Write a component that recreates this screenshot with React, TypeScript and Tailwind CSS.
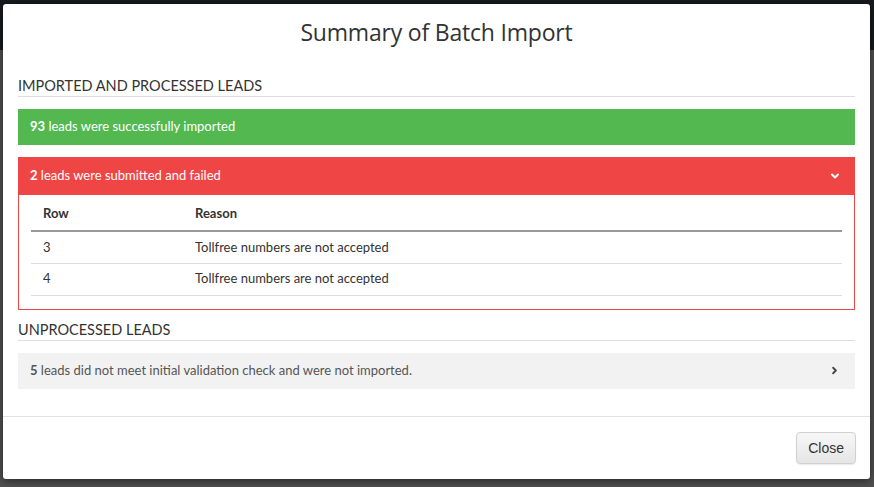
import { ChevronDown, ChevronRight } from "lucide-react";

const failed = [
  { row: 3, reason: "Tollfree numbers are not accepted" },
  { row: 4, reason: "Tollfree numbers are not accepted" },
];

function SectionTitle({ children }: { children: React.ReactNode }) {
  return (
    <h3 className="text-[14.5px] leading-[18px] text-[#333] uppercase border-b border-[#dedede] pb-[1px]">
      {children}
    </h3>
  );
}

export default function App() {
  return (
    <div className="relative w-[874px] h-[487px] bg-[#505050] overflow-hidden font-['Lato',sans-serif]">
      {/* app header behind the backdrop */}
      <div className="h-[50px] bg-[#161a1e]" />

      {/* Modal */}
      <div className="absolute left-[3px] top-[4px] w-[867px] h-[475px] bg-white rounded-[3px] shadow-[0_2px_8px_rgba(0,0,0,0.5)] flex flex-col">
        <div className="h-[56px] flex items-center justify-center">
          <h2 className="text-[23px] text-[#333] font-['Open_Sans',sans-serif] tracking-[-0.2px]">
            Summary of Batch Import
          </h2>
        </div>

        <div className="px-[15px] pt-[17px] flex flex-col">
          <SectionTitle>Imported and processed leads</SectionTitle>

          <div className="mt-[12px] h-[36px] bg-[#52b84f] text-white text-[13px] flex items-center px-[12px]">
            <span>
              <b>93</b> leads were successfully imported
            </span>
          </div>

          <div className="mt-[12px]">
            <div className="h-[38px] bg-[#f04545] text-white text-[13px] flex items-center justify-between px-[12px]">
              <span>
                <b>2</b> leads were submitted and failed
              </span>
              <ChevronDown size={12} strokeWidth={4} className="mr-[2px]" />
            </div>
            <div className="border border-t-0 border-[#f04545] px-[12px] pt-[3px] pb-[13px]">
              <table className="w-full text-[13px] text-[#333]">
                <thead>
                  <tr className="border-b-2 border-[#999]">
                    <th className="text-left font-bold w-[164px] pl-[12px] h-[33px]">Row</th>
                    <th className="text-left font-bold">Reason</th>
                  </tr>
                </thead>
                <tbody>
                  {failed.map((f) => (
                    <tr key={f.row} className="border-b border-[#ddd]">
                      <td className="pl-[12px] h-[32px]">{f.row}</td>
                      <td>{f.reason}</td>
                    </tr>
                  ))}
                </tbody>
              </table>
            </div>
          </div>

          <div className="mt-[11px]">
            <SectionTitle>Unprocessed leads</SectionTitle>
          </div>

          <div className="mt-[12px] h-[36px] bg-[#f2f2f2] text-[#555] text-[13px] flex items-center justify-between px-[12px]">
            <span>
              <b>5</b> leads did not meet initial validation check and were not imported.
            </span>
            <ChevronRight size={11} strokeWidth={4} className="mr-[3px] text-[#444]" />
          </div>
        </div>

        <div className="mt-auto border-t border-[#e2e2e2] h-[63px] flex items-center justify-end px-[14px]">
          <button className="h-[32px] px-[11px] rounded-[4px] border border-[#d0d0d0] bg-gradient-to-b from-[#f7f7f7] to-[#e5e5e5] text-[14px] text-[#333] font-['Liberation_Sans',sans-serif] shadow-[0_1px_1px_rgba(0,0,0,0.08)]">
            Close
          </button>
        </div>
      </div>
    </div>
  );
}
